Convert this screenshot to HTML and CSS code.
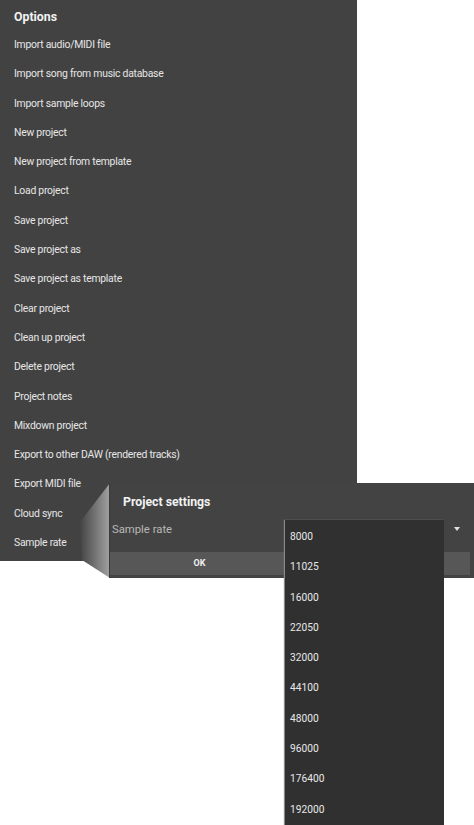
FILE: index.html
```html
<!DOCTYPE html>
<html lang="en">
<head>
    <meta charset="UTF-8">
    <title>Options</title>
    <link rel="stylesheet" href="styles.css">
</head>
<body>
    <div class="options-menu">
        <div class="menu-title">Options</div>
        <div class="menu-item">Import audio/MIDI file</div>
        <div class="menu-item">Import song from music database</div>
        <div class="menu-item">Import sample loops</div>
        <div class="menu-item">New project</div>
        <div class="menu-item">New project from template</div>
        <div class="menu-item">Load project</div>
        <div class="menu-item">Save project</div>
        <div class="menu-item">Save project as</div>
        <div class="menu-item">Save project as template</div>
        <div class="menu-item">Clear project</div>
        <div class="menu-item">Clean up project</div>
        <div class="menu-item">Delete project</div>
        <div class="menu-item">Project notes</div>
        <div class="menu-item">Mixdown project</div>
        <div class="menu-item">Export to other DAW (rendered tracks)</div>
        <div class="menu-item">Export MIDI file</div>
        <div class="menu-item">Cloud sync</div>
        <div class="menu-item">Sample rate</div>
    </div>

    <!-- callout wedge joining "Sample rate" to the dialog -->
    <svg class="callout" width="40" height="100" viewBox="0 0 40 100">
        <defs>
            <linearGradient id="wedge" x1="0" y1="0" x2="1" y2="0">
                <stop offset="0" stop-color="#444"/>
                <stop offset="1" stop-color="#a2a2a2"/>
            </linearGradient>
        </defs>
        <polygon points="40,0 10,39 12,77 40,95" fill="url(#wedge)"/>
    </svg>

    <div class="dialog">
        <div class="dialog-title">Project settings</div>
        <div class="dialog-row">
            <span class="row-label">Sample rate</span>
            <span class="caret"></span>
        </div>
        <div class="dialog-buttons">
            <div class="dialog-btn">OK</div>
            <div class="dialog-btn">Cancel</div>
        </div>
    </div>

    <div class="rate-list">
        <div class="rate">8000</div>
        <div class="rate">11025</div>
        <div class="rate">16000</div>
        <div class="rate">22050</div>
        <div class="rate">32000</div>
        <div class="rate">44100</div>
        <div class="rate">48000</div>
        <div class="rate">96000</div>
        <div class="rate">176400</div>
        <div class="rate">192000</div>
    </div>
</body>
</html>
```

FILE: styles.css
```css
body {
    margin: 0;
    background: #fff;
    font-family: Roboto, 'Noto Sans', sans-serif;
    position: relative;
    width: 474px;
    height: 825px;
    overflow: hidden;
}
.options-menu {
    width: 357px;
    height: 561px;
    box-sizing: border-box;
    padding-left: 14px;
    background: #424242;
    display: flex;
    flex-direction: column;
}
.menu-title {
    height: 26px;
    padding-top: 4px;
    line-height: 26px;
    font-size: 12.3px;
    font-weight: bold;
    color: #f2f2f2;
}
.menu-item {
    height: 29.3px;
    line-height: 29.3px;
    font-size: 10.4px;
    letter-spacing: -0.25px;
    color: #e6e6e6;
    white-space: nowrap;
}
.callout {
    position: absolute;
    left: 70px;
    top: 483px;
}
.dialog {
    position: absolute;
    left: 110px;
    top: 483px;
    width: 364px;
    height: 95px;
    background: #434343;
    box-shadow: -1px 0 0 #3a3a3a;
    display: flex;
    flex-direction: column;
}
.dialog-title {
    height: 38px;
    line-height: 38px;
    padding-left: 13px;
    font-size: 12.3px;
    font-weight: bold;
    color: #f2f2f2;
}
.dialog-row {
    height: 31px;
    display: flex;
    align-items: center;
    justify-content: space-between;
    padding: 0 14px 7px 2px;
    margin-top: -4px;
    box-sizing: border-box;
}
.row-label {
    font-size: 11.3px;
    color: #b8b8b8;
}
.caret {
    width: 0;
    height: 0;
    border-left: 3px solid transparent;
    border-right: 3px solid transparent;
    border-top: 4px solid #e0e0e0;
}
.dialog-buttons {
    display: flex;
    gap: 2px;
    height: 23px;
    margin-top: 4px;
    margin-right: 4px;
}
.dialog-btn {
    flex: 1;
    background: #575757;
    color: #f0f0f0;
    font-size: 9px;
    font-weight: bold;
    text-align: center;
    line-height: 23px;
}
.rate-list {
    position: absolute;
    left: 285px;
    top: 520px;
    width: 159px;
    height: 305px;
    padding-top: 2px;
    box-sizing: border-box;
    background: #303030;
    box-shadow: -1px 0 1px #8a8a8a;
    display: flex;
    flex-direction: column;
}
.rate {
    height: 30.3px;
    line-height: 30.3px;
    padding-left: 5px;
    font-size: 10.2px;
    color: #e8e8e8;
}
```
